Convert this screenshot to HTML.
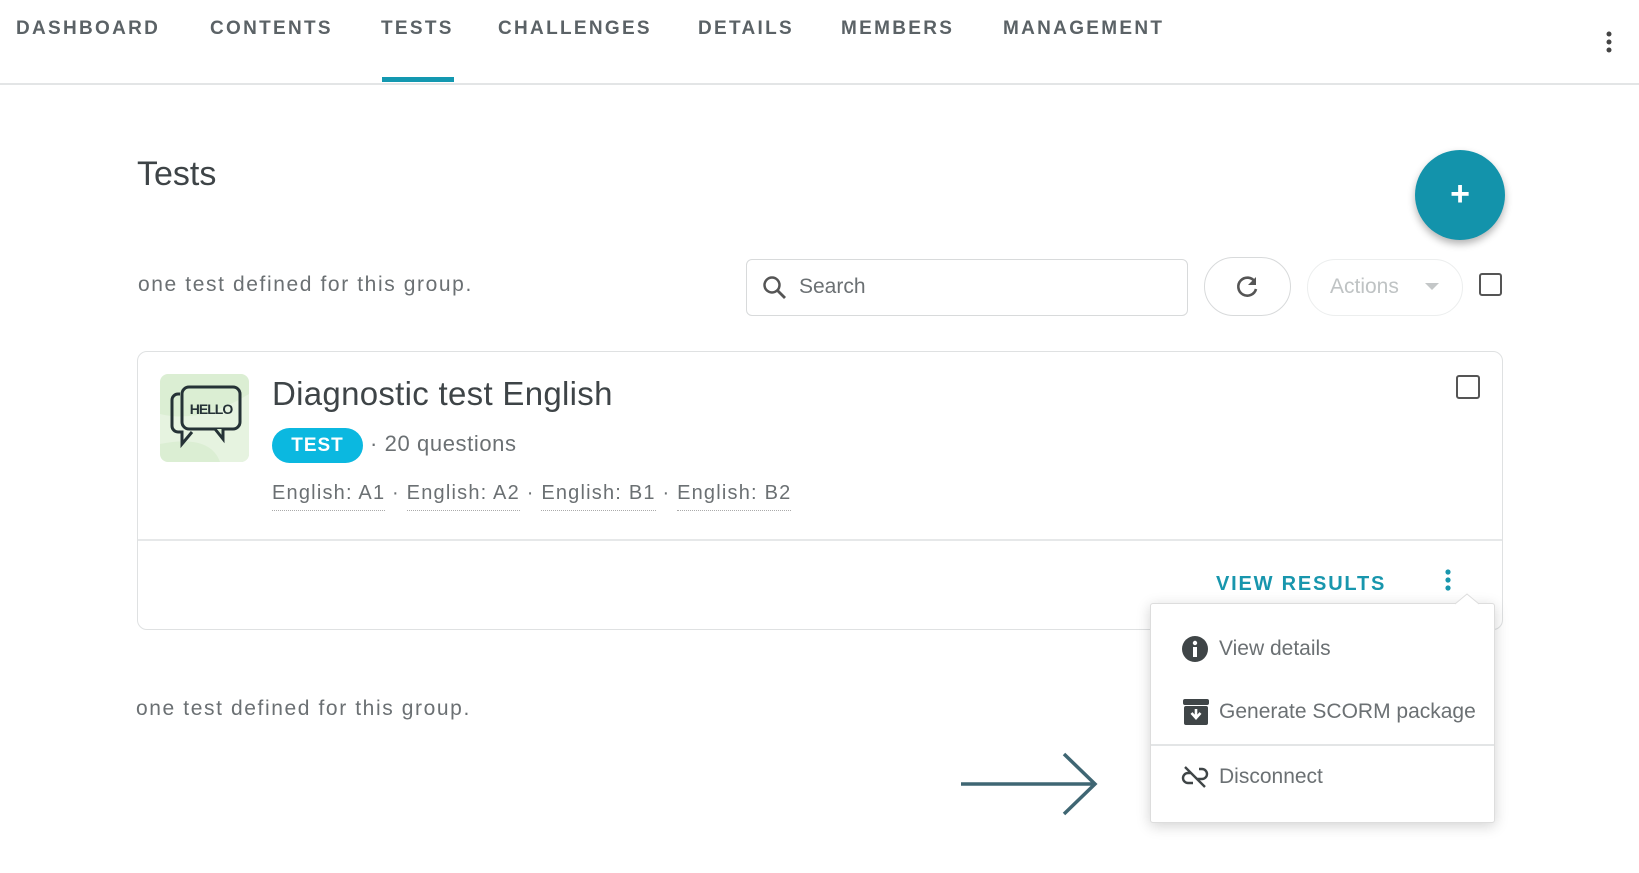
<!DOCTYPE html>
<html><head><meta charset="utf-8"><style>
*{box-sizing:border-box;margin:0;padding:0}
body{width:1639px;height:873px;background:#fff;font-family:"Liberation Sans",sans-serif;color:#4a4f52;position:relative;overflow:hidden}
.a{position:absolute;white-space:nowrap}
.nav{font-size:19px;letter-spacing:2.3px;color:#5b6266;font-weight:bold;top:18px}
.gray{color:#6b7073}
</style></head><body>
<div class="a nav" style="left:16px">DASHBOARD</div>
<div class="a nav" style="left:210px">CONTENTS</div>
<div class="a nav" style="left:381px">TESTS</div>
<div class="a nav" style="left:498px">CHALLENGES</div>
<div class="a nav" style="left:698px">DETAILS</div>
<div class="a nav" style="left:841px">MEMBERS</div>
<div class="a nav" style="left:1003px">MANAGEMENT</div>
<div class="a" style="left:382px;top:77px;width:72px;height:5px;background:#1398b0"></div>
<div class="a" style="left:0;top:83px;width:1639px;height:2px;background:#e3e5e6"></div>
<svg class="a" style="left:1604px;top:30px" width="10" height="26"><circle cx="5" cy="4" r="2.5" fill="#444"/><circle cx="5" cy="12" r="2.5" fill="#444"/><circle cx="5" cy="20" r="2.5" fill="#444"/></svg>

<div class="a" style="left:137px;top:155px;font-size:34px;color:#3e4447">Tests</div>
<div class="a" style="left:1415px;top:150px;width:90px;height:90px;border-radius:50%;background:#1393ab;box-shadow:0 4px 8px rgba(0,0,0,.3);color:#fff;font-size:34px;text-align:center;line-height:88px;font-weight:bold">+</div>

<div class="a gray" style="left:138px;top:273px;font-size:21px;letter-spacing:1.6px">one test defined for this group.</div>
<div class="a" style="left:746px;top:259px;width:442px;height:57px;border:1.5px solid #d8dadb;border-radius:6px"></div>
<svg class="a" style="left:762px;top:275px" width="26" height="26"><circle cx="10" cy="10" r="7.5" fill="none" stroke="#555" stroke-width="2.5"/><line x1="15.5" y1="15.5" x2="23" y2="23" stroke="#555" stroke-width="2.8"/></svg>
<div class="a gray" style="left:799px;top:275px;font-size:21px">Search</div>
<div class="a" style="left:1204px;top:257px;width:87px;height:59px;border:1.5px solid #d8dadb;border-radius:30px"></div>
<svg class="a" style="left:1236px;top:275px" width="24" height="24"><path d="M19 7A9 9 0 1 0 20 14" fill="none" stroke="#555" stroke-width="2.6"/><path d="M20 2v8h-8z" fill="#555"/></svg>
<div class="a" style="left:1307px;top:259px;width:156px;height:57px;border:1.5px solid #eceeee;border-radius:30px"></div>
<div class="a" style="left:1330px;top:275px;font-size:21px;color:#bfc3c4">Actions</div>
<svg class="a" style="left:1425px;top:283px" width="14" height="8"><path d="M0 0h14L7 7z" fill="#c4c7c8"/></svg>
<div class="a" style="left:1479px;top:273px;width:23px;height:23px;border:2px solid #555;border-radius:3px"></div>

<div class="a" style="left:137px;top:351px;width:1366px;height:279px;border:1.5px solid #dfe1e2;border-radius:10px"></div>
<div class="a" style="left:138px;top:539px;width:1364px;height:1.5px;background:#e6e8e9"></div>
<div class="a" style="left:160px;top:374px;width:89px;height:88px;border-radius:8px;background:#dbeed3;overflow:hidden">
<svg width="89" height="88"><path d="M0 40 Q40 50 89 20 V88 H60 Q50 60 0 70z" fill="#e6f3e0"/>
<path d="M20 20 h-2 a6 6 0 0 0-6 6 v26 a6 6 0 0 0 6 6 h4 v12 l10-12" fill="none" stroke="#253236" stroke-width="3"/>
<rect x="22" y="13" width="58" height="42" rx="7" fill="none" stroke="#253236" stroke-width="3"/>
<path d="M55 55 l8 10 v-10" fill="#dbeed3" stroke="#253236" stroke-width="3"/>
<text x="51" y="40" font-family="Liberation Sans" font-weight="bold" font-size="14" text-anchor="middle" fill="#253236" letter-spacing="-1">HELLO</text></svg></div>
<div class="a" style="left:272px;top:375px;font-size:33px;color:#3e4447;letter-spacing:0.3px">Diagnostic test English</div>
<div class="a" style="left:272px;top:428px;width:91px;height:35px;border-radius:18px;background:#0bb8e0;color:#fff;font-size:19px;font-weight:bold;text-align:center;line-height:35px;letter-spacing:1px">TEST</div>
<div class="a gray" style="left:370px;top:431px;font-size:22px;letter-spacing:0.6px">· 20 questions</div>
<div class="a gray" style="left:272px;top:482px;font-size:20px;letter-spacing:1.2px"><span style="border-bottom:1.5px dotted #aaa;padding-bottom:6px">English: A1</span> · <span style="border-bottom:1.5px dotted #aaa;padding-bottom:6px">English: A2</span> · <span style="border-bottom:1.5px dotted #aaa;padding-bottom:6px">English: B1</span> · <span style="border-bottom:1.5px dotted #aaa;padding-bottom:6px">English: B2</span></div>
<div class="a" style="left:1456px;top:375px;width:24px;height:24px;border:2px solid #555;border-radius:3px"></div>
<div class="a" style="left:1216px;top:573px;font-size:20px;font-weight:bold;color:#1896ad;letter-spacing:1.8px">VIEW RESULTS</div>
<svg class="a" style="left:1443px;top:568px" width="10" height="26"><circle cx="5" cy="4" r="2.6" fill="#1896ad"/><circle cx="5" cy="12" r="2.6" fill="#1896ad"/><circle cx="5" cy="20" r="2.6" fill="#1896ad"/></svg>

<div class="a gray" style="left:136px;top:697px;font-size:21px;letter-spacing:1.6px">one test defined for this group.</div>
<svg class="a" style="left:958px;top:752px" width="142" height="64"><path d="M3 32H136M106 2L137 32L106 62" fill="none" stroke="#3f6673" stroke-width="3.5"/></svg>

<div class="a" style="left:1150px;top:603px;width:345px;height:220px;background:#fff;border:1px solid #ddd;border-radius:3px;box-shadow:0 3px 14px rgba(0,0,0,.18)"></div>
<svg class="a" style="left:1455px;top:593px" width="24" height="12"><path d="M0 11L12 1L24 11" fill="#fff" stroke="#ddd"/></svg>
<div class="a" style="left:1151px;top:744px;width:343px;height:1.5px;background:#e3e5e6"></div>
<svg class="a" style="left:1182px;top:636px" width="26" height="26"><circle cx="13" cy="13" r="13" fill="#3f4547"/><rect x="11" y="11" width="4" height="10" fill="#fff"/><circle cx="13" cy="7" r="2.2" fill="#fff"/></svg>
<div class="a gray" style="left:1219px;top:637px;font-size:21px">View details</div>
<svg class="a" style="left:1183px;top:699px" width="26" height="26"><rect x="0" y="0" width="26" height="6" rx="2" fill="#3f4547"/><rect x="1" y="7" width="24" height="19" rx="2" fill="#3f4547"/><path d="M13 10v8M8.5 14L13 19L17.5 14" stroke="#fff" stroke-width="2.6" fill="none"/></svg>
<div class="a gray" style="left:1219px;top:700px;font-size:21px">Generate SCORM package</div>
<svg class="a" style="left:1181px;top:764px" width="28" height="24"><path d="M10 9H7a5 5 0 0 0 0 10h5M18 5h3a5 5 0 0 1 0 10h-5M4 3L24 23" fill="none" stroke="#3f4547" stroke-width="2.4"/></svg>
<div class="a gray" style="left:1219px;top:765px;font-size:21px">Disconnect</div>
</body></html>
